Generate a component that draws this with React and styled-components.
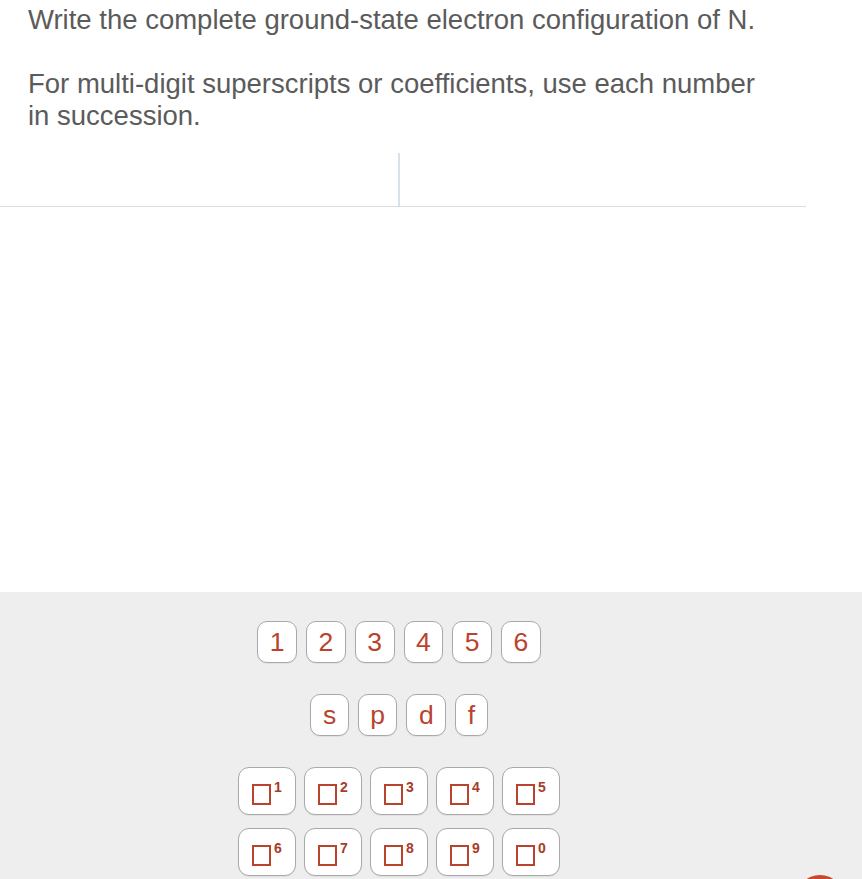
import React from "react";
import styled, { createGlobalStyle } from "styled-components";

const Global = createGlobalStyle`
  html, body { margin: 0; padding: 0; background: #fff; }
  body { font-family: "Liberation Sans", Arial, sans-serif; }
`;

const Page = styled.div`
  position: relative;
  width: 862px;
  height: 879px;
  overflow: hidden;
  display: flex;
  flex-direction: column;
`;

const Prompt = styled.div`
  padding: 4px 0 0 28px;
  width: 745px;
  color: #5b5b5b;
  font-size: 27.5px;
  line-height: 32px;
`;

const Para = styled.p`
  margin: 0 0 ${(p) => p.$gap || 0}px 0;
`;

const AnswerArea = styled.div`
  margin-top: 21px;
  width: 806px;
  height: 53px;
  border-bottom: 1px solid #dcdcdc;
  display: flex;
`;

const AnswerLeft = styled.div`
  width: 398px;
  border-right: 2px solid #d6e2ee;
`;

const Spacer = styled.div`
  flex: 1;
`;

const Keypad = styled.div`
  height: 287px;
  background: #eeeeee;
  box-sizing: border-box;
  padding: 29px 64px 0 0;
  display: flex;
  flex-direction: column;
  align-items: center;
`;

const Row = styled.div`
  display: flex;
  gap: ${(p) => p.$gap}px;
  margin-bottom: ${(p) => p.$mb}px;
`;

const Key = styled.button`
  box-sizing: border-box;
  height: 42px;
  padding: 0 11.5px;
  background: #fff;
  border: 1px solid #a9a9a9;
  border-radius: 10px;
  color: #b9432e;
  font-family: "Liberation Sans", Arial, sans-serif;
  font-size: 26.5px;
  line-height: 1;
  display: flex;
  align-items: center;
  justify-content: center;
  box-shadow: 0 1px 1px rgba(0, 0, 0, 0.06);
`;

const SupKey = styled(Key)`
  width: 58px;
  height: 48px;
  padding: 0;
  border-radius: 11px;
  align-items: flex-start;
  padding-top: 12px;
  gap: 3px;
`;

const Box = styled.span`
  display: block;
  width: 19px;
  height: 21px;
  margin-top: 4px;
  box-sizing: border-box;
  border: 2px solid #b9432e;
`;

const Sup = styled.span`
  font-size: 14px;
  font-weight: bold;
  line-height: 14px;
  color: #a83c28;
`;

const Fab = styled.div`
  position: absolute;
  left: 796px;
  top: 875px;
  width: 48px;
  height: 48px;
  border-radius: 50%;
  background: #c9472f;
`;

export default function App() {
  const nums = ["1", "2", "3", "4", "5", "6"];
  const orbs = ["s", "p", "d", "f"];
  const sups1 = ["1", "2", "3", "4", "5"];
  const sups2 = ["6", "7", "8", "9", "0"];
  return (
    <Page>
      <Global />
      <Prompt>
        <Para $gap={32}>Write the complete ground-state electron configuration of N.</Para>
        <Para>For multi-digit superscripts or coefficients, use each number in succession.</Para>
      </Prompt>
      <AnswerArea>
        <AnswerLeft />
      </AnswerArea>
      <Spacer />
      <Keypad>
        <Row $gap={9} $mb={31}>
          {nums.map((n) => (
            <Key key={n}>{n}</Key>
          ))}
        </Row>
        <Row $gap={9} $mb={31}>
          {orbs.map((n) => (
            <Key key={n}>{n}</Key>
          ))}
        </Row>
        <Row $gap={8} $mb={13}>
          {sups1.map((n) => (
            <SupKey key={n}>
              <Box />
              <Sup>{n}</Sup>
            </SupKey>
          ))}
        </Row>
        <Row $gap={8} $mb={0}>
          {sups2.map((n) => (
            <SupKey key={n}>
              <Box />
              <Sup>{n}</Sup>
            </SupKey>
          ))}
        </Row>
      </Keypad>
      <Fab />
    </Page>
  );
}
